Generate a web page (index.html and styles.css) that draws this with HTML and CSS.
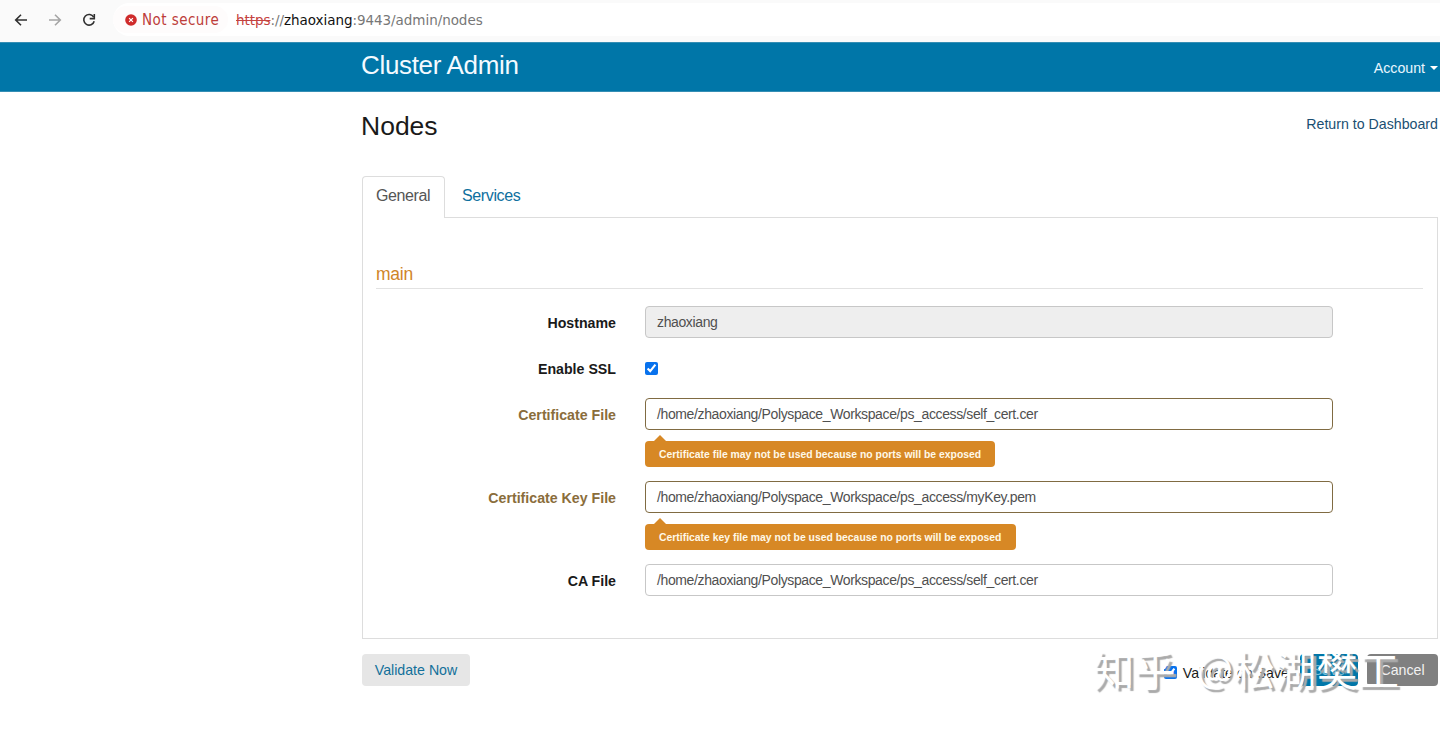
FILE: index.html
```html
<!DOCTYPE html>
<html lang="en">
<head>
<meta charset="utf-8">
<title>Cluster Admin</title>
<link rel="stylesheet" href="styles.css">
</head>
<body>
<div class="browser">
  <svg class="nav-icon" viewBox="0 0 16 16"><path d="M14 8H3M8 2.7 2.7 8 8 13.3"/></svg>
  <svg class="nav-icon disabled" viewBox="0 0 16 16"><path d="M2 8h11M8 2.7 13.3 8 8 13.3"/></svg>
  <svg class="nav-icon" viewBox="0 0 16 16"><path d="M12.7 5.2A5.3 5.3 0 1 0 13.2 9.2"/><path d="M13.3 2v4.6H8.7"/></svg>
  <div class="address">
    <div class="security">
      <svg class="warn" viewBox="0 0 12 12"><circle cx="6" cy="6" r="5.8"/><path d="m4.1 4.1 3.8 3.8m0-3.8L4.1 7.9"/></svg>
      <span>Not secure</span>
    </div>
    <div class="url"><s>https</s>://<b>zhaoxiang</b>:9443/admin/nodes</div>
  </div>
</div>
<header class="topbar">
  <div class="brand">Cluster Admin</div>
  <div class="account">Account <i class="caret"></i></div>
</header>
<main class="page">
  <div class="title-row">
    <h1>Nodes</h1>
    <a class="return">Return to Dashboard</a>
  </div>
  <nav class="tabs">
    <a class="tab active">General</a>
    <a class="tab">Services</a>
  </nav>
  <section class="panel">
    <h2>main</h2>
    <div class="row">
      <label>Hostname</label>
      <div class="field"><div class="input readonly">zhaoxiang</div></div>
    </div>
    <div class="row check-row">
      <label>Enable SSL</label>
      <div class="field"><input class="check" type="checkbox" checked></div>
    </div>
    <div class="row warning">
      <label>Certificate File</label>
      <div class="field">
        <div class="input">/home/zhaoxiang/Polyspace_Workspace/ps_access/self_cert.cer</div>
        <div class="message">Certificate file may not be used because no ports will be exposed</div>
      </div>
    </div>
    <div class="row warning">
      <label>Certificate Key File</label>
      <div class="field">
        <div class="input">/home/zhaoxiang/Polyspace_Workspace/ps_access/myKey.pem</div>
        <div class="message long">Certificate key file may not be used because no ports will be exposed</div>
      </div>
    </div>
    <div class="row">
      <label>CA File</label>
      <div class="field"><div class="input">/home/zhaoxiang/Polyspace_Workspace/ps_access/self_cert.cer</div></div>
    </div>
  </section>
  <footer class="actions">
    <div class="button validate">Validate Now</div>
    <div class="on-save"><input class="check" type="checkbox" checked><span>Validate on Save</span></div>
    <div class="button save">Save</div>
    <div class="button cancel">Cancel</div>
    <div class="watermark">知乎 <span class="at">@</span>松湖樊工</div>
  </footer>
</main>
</body>
</html>
```
FILE: styles.css
```css
* { box-sizing: border-box; }
body {
  margin: 0;
  height: 731px;
  overflow: hidden;
  background: #fff;
  color: #1a1a1a;
  font: 14.2px/20px "Liberation Sans", Arial, sans-serif;
}
.browser {
  display: flex;
  align-items: center;
  height: 42px;
  padding: 0 0 3px 13px;
  background: #fafafa;
}
.nav-icon {
  width: 16px;
  height: 16px;
  margin-right: 18px;
  fill: none;
  stroke: #303030;
  stroke-width: 1.6;
}
.nav-icon.disabled { stroke: #a5a5a5; }
.address {
  display: flex;
  align-items: center;
  flex: 1;
  height: 33px;
  margin-left: -2px;
  border-radius: 17px 0 0 17px;
  background: #fff;
}
.security {
  display: flex;
  align-items: center;
  width: 115px;
  height: 27px;
  padding-left: 12px;
  border-radius: 14px;
  background: #fefcfc;
  color: #bd3c3a;
  font: 15px/20px "DejaVu Sans Condensed", "DejaVu Sans", sans-serif;
  font-stretch: condensed;
  letter-spacing: .45px;
  white-space: nowrap;
}
.warn { width: 12px; height: 12px; margin-right: 5px; fill: #cf2b2b; stroke: #fff; stroke-width: 1.2; }
.warn circle { stroke: none; }
.url {
  margin-left: 8px;
  color: #777;
  font: 13.5px/20px "DejaVu Sans", sans-serif;
  letter-spacing: -.05px;
  white-space: nowrap;
}
.url s { color: #c54340; }
.url b { color: #111; font-weight: 400; }
.topbar {
  display: flex;
  justify-content: space-between;
  height: 50px;
  padding: 0 2px 0 361px;
  border-top: 1px solid #358eb4;
  border-bottom: 1px solid #358eb4;
  background: #0076a8;
  color: #fff;
}
.brand { padding-top: 7px; font-size: 26px; line-height: 30px; letter-spacing: -.33px; color: #f4faff; }
.account { display: flex; align-items: center; height: 50px; color: #e8f6ff; }
.caret { margin-left: 5px; border: 4px solid transparent; border-top-color: #fff; border-bottom: 0; }
.page { margin: 0 2px 0 362px; }
.title-row { display: flex; justify-content: space-between; height: 84px; padding-top: 19px; }
h1 { margin: 0 0 0 -1px; font-size: 26.5px; line-height: 30px; font-weight: 400; }
.return { padding-top: 3px; color: #1b4f72; }
.tabs { display: flex; height: 42px; }
.tab { height: 42px; padding: 10px 15px 0; color: #0e6f9e; font-size: 16px; line-height: 20px; letter-spacing: -.38px; }
.tab.active {
  position: relative;
  width: 83px;
  padding-left: 13px;
  margin-right: 2px;
  border: 1px solid #ddd;
  border-bottom: 0;
  border-radius: 4px 4px 0 0;
  padding-top: 9px;
  background: #fff;
  color: #555;
}
.panel {
  height: 422px;
  margin-top: -1px;
  padding: 45px 14px 0 13px;
  border: 1px solid #ddd;
}
h2 {
  height: 26px;
  margin: 0 0 17px;
  border-bottom: 1px solid #e2e2e2;
  color: #d08527;
  font-size: 17.5px;
  letter-spacing: -.25px;
  font-weight: 400;
  line-height: 23px;
}
.row { display: flex; min-height: 47px; }
.row label { width: 240px; margin-right: 29px; padding-top: 7px; text-align: right; font-weight: 700; }
.row.check-row { min-height: 45px; }
.row.check-row label { padding-top: 6px; }
.field { width: 688px; }
.input {
  height: 32px;
  padding: 5px 11px;
  border: 1px solid #c7c7c7;
  border-radius: 4px;
  color: #505050;
  font-size: 14px;
  letter-spacing: -.375px;
}
.input.readonly { background: #eee; }
.check { display: block; width: 13px; height: 13px; margin: 0; accent-color: #0872ed; }
.check-row .check { margin-top: 9px; }
.warning { min-height: 83px; }
.warning label { color: #8a6d3b; }
.warning .input { border-color: #806b42; }
.message {
  position: relative;
  width: 350px;
  height: 26px;
  margin-top: 11px;
  padding-left: 14px;
  border-radius: 4px;
  background: #d78825;
  color: #fff8e8;
  font-size: 10.4px;
  font-weight: 700;
  line-height: 27px;
  white-space: nowrap;
}
.message.long { width: 371px; }
.message::before {
  content: "";
  position: absolute;
  left: 9px;
  top: -6px;
  border: 6px solid transparent;
  border-top: 0;
  border-bottom-color: #d78825;
}
.actions { position: relative; display: flex; height: 32px; margin-top: 15px; }
.button { height: 32px; border-radius: 4px; line-height: 33px; text-align: center; }
.validate { width: 108px; background: #e6e6e6; color: #13709a; }
.on-save { display: flex; align-items: center; gap: 6px; margin-left: auto; padding-top: 5px; white-space: nowrap; }
.save { width: 58px; margin-left: 11px; background: #0076a8; color: #75c0dc; }
.cancel { width: 71px; margin-left: 9px; background: #808080; color: #f2f2f2; }
.watermark {
  position: absolute;
  left: 731px;
  top: -16px;
  color: #fff;
  font: 41.3px/60px "Noto Sans CJK SC", sans-serif;
  text-shadow: 3px 3px 1px #aaa;
  white-space: nowrap;
}
.watermark .at { display: inline-block; margin: 0 1px 0 12px; font-size: 38px; line-height: 40px; vertical-align: 3px; }
```
